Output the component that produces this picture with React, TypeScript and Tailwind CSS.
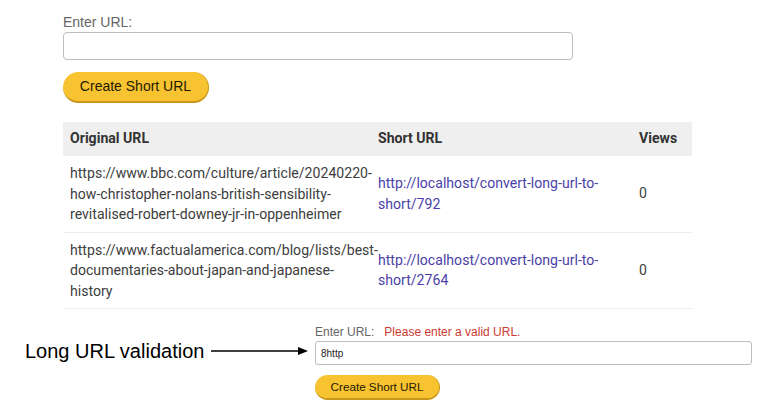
import React from "react";

const rows = [
  {
    original: "https://www.bbc.com/culture/article/20240220-how-christopher-nolans-british-sensibility-revitalised-robert-downey-jr-in-oppenheimer",
    short: "http://localhost/convert-long-url-to-short/792",
    views: 0,
  },
  {
    original: "https://www.factualamerica.com/blog/lists/best-documentaries-about-japan-and-japanese-history",
    short: "http://localhost/convert-long-url-to-short/2764",
    views: 0,
  },
];

const sans = "font-['Liberation_Sans',Arial,sans-serif]";

function YellowButton({ small }: { small?: boolean }) {
  return (
    <button
      className={
        small
          ? `${sans} h-[25px] w-[125px] rounded-full border-b-2 border-r border-[#c9971a] bg-[#f8c330] text-[11.7px] text-[#1f1a00]`
          : `${sans} h-[31px] w-[146px] rounded-full border-b-2 border-r border-[#c9971a] bg-[#f8c330] text-[14px] text-[#1f1a00]`
      }
    >
      Create Short URL
    </button>
  );
}

export default function App() {
  return (
    <div className="h-[402px] w-[768px] overflow-hidden bg-white">
      {/* Main form */}
      <div className="pl-[63px] pt-[13px]">
        <label className={`${sans} block text-[14px] leading-[18px] text-[#666]`}>Enter URL:</label>
        <input className="mt-[1px] block h-[28px] w-[510px] rounded-[4px] border border-[#bdbdbd] bg-white outline-none" />
        <div className="mt-[12px]">
          <YellowButton />
        </div>

        <table className="mt-[19px] w-[629px] table-fixed border-collapse font-['Roboto',sans-serif] text-[14.1px] text-[#3d3d3d]">
          <colgroup>
            <col className="w-[307px]" />
            <col className="w-[261px]" />
            <col className="w-[61px]" />
          </colgroup>
          <thead>
            <tr className="bg-[#efefef]">
              <th className="h-[34px] px-[7px] text-left font-bold text-[#333]">Original URL</th>
              <th className="px-[8px] text-left font-bold text-[#333]">Short URL</th>
              <th className="px-[8px] text-left font-bold text-[#333]">Views</th>
            </tr>
          </thead>
          <tbody>
            {rows.map((r) => (
              <tr key={r.short} className="border-b border-[#ececec]">
                <td className="py-[7px] pl-[7px] pr-[4px] leading-[20.5px]">{r.original}</td>
                <td className="px-[8px] py-[7px] leading-[20.5px] text-[#4a3fa8]">{r.short}</td>
                <td className="px-[8px] py-[7px]">{r.views}</td>
              </tr>
            ))}
          </tbody>
        </table>
      </div>

      {/* Annotated validation inset */}
      <div className="mt-[16px] flex items-start">
        <div className="flex w-[315px] items-center pl-[25px] pt-[11px]">
          <span className={`${sans} text-[20px] text-black`}>Long URL validation</span>
          <svg width="100" height="10" viewBox="0 0 100 10" className="ml-[6px]">
            <line x1="1" y1="5" x2="90" y2="5" stroke="#000" strokeWidth="1.6" />
            <polygon points="88,1 98,5 88,9" fill="#000" />
          </svg>
        </div>
        <div className="flex-1 pr-[16px]">
          <div className={`${sans} text-[12px] leading-[15px]`}>
            <span className="text-[#666]">Enter URL:</span>
            <span className="ml-[10px] text-[#cc3a32]">Please enter a valid URL.</span>
          </div>
          <div className={`${sans} mt-[1px] flex h-[24px] items-center rounded-[3px] border border-[#bdbdbd] px-[5px] text-[10px] text-[#222]`}>
            8http
          </div>
          <div className="mt-[8px]">
            <YellowButton small />
          </div>
        </div>
      </div>
    </div>
  );
}
